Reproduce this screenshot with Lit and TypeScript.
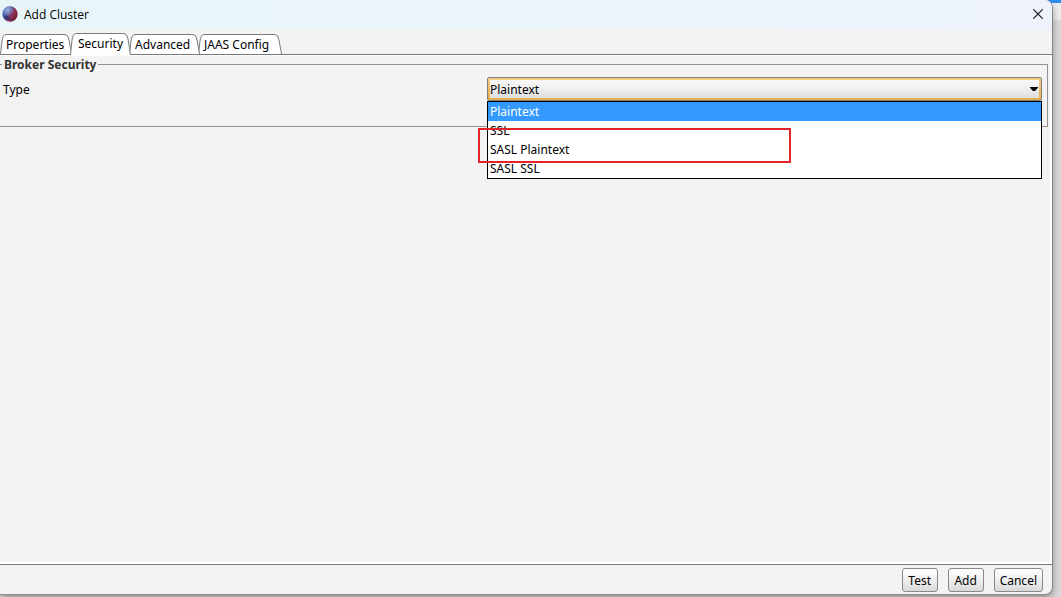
import { LitElement, html, css } from "lit";
import { customElement, state } from "lit/decorators.js";
import { classMap } from "lit/directives/class-map.js";

const TABS = ["Properties", "Security", "Advanced", "JAAS Config"];
const TYPES = ["Plaintext", "SSL", "SASL Plaintext", "SASL SSL"];

@customElement("app-root")
export class AppRoot extends LitElement {
  @state() private tab = "Security";
  @state() private type = "Plaintext";

  static styles = css`
    :host {
      display: block;
      box-sizing: border-box;
      height: 100vh;
      padding: 0 8px 2px 0;
      overflow: hidden;
      background: linear-gradient(#2f8ff0 0 3px, #eeeeee 3px 20px, #dcdcdc 20px);
      font: 12px/19px "Noto Sans", "Open Sans", sans-serif;
      color: #000;
    }
    * { box-sizing: border-box; }
    button, select { font: inherit; color: inherit; }
    .window {
      display: flex;
      flex-direction: column;
      height: 100%;
      background: #f3f3f3;
      border-right: 1px solid #858585;
      border-bottom: 1px solid #8c8c8c;
      border-radius: 0 8px 8px 0;
      box-shadow: 0 4px 8px rgba(0, 0, 0, 0.35);
      overflow: hidden;
    }
    .titlebar {
      display: flex;
      flex: none;
      align-items: center;
      gap: 6px;
      height: 30px;
      padding: 0 9px 2px 2px;
      background: linear-gradient(90deg, #e8f5f8, #eef3fb);
    }
    .logo { display: block; width: 16px; height: 16px; }
    .title {
      flex: 1;
      margin: 0;
      font: 400 12px/19px "Open Sans", "Noto Sans", sans-serif;
    }
    .close { display: block; padding: 0; border: 0; background: none; }
    .close svg { display: block; width: 10px; height: 10px; }
    .tabs {
      display: grid;
      grid-template-columns: 70px 59px 69px 82px;
      align-items: end;
      flex: none;
      height: 24px;
    }
    .tab {
      position: relative;
      display: flex;
      height: 20px;
      margin-right: -2px;
      padding: 0;
      border: 0;
      background: none;
      text-align: left;
      line-height: 19px;
    }
    .tab:nth-child(1) { z-index: 3; }
    .tab:nth-child(2) { z-index: 2; }
    .tab:nth-child(3) { z-index: 1; }
    .tab.on { z-index: 4; height: 22px; margin-bottom: -1px; }
    .label {
      flex: 1;
      height: 100%;
      border-top: 1px solid #7a7a7a;
      background: #fff;
      white-space: nowrap;
    }
    .on .label { padding-left: 2px; }
    .cap { display: block; flex: none; height: 100%; fill: #fff; }
    .cap.l { width: 6px; }
    .cap.r { width: 7px; }
    .cap .edge { fill: none; stroke: #7a7a7a; }
    .panel {
      flex: 1;
      padding-right: 4px;
      border-top: 1px solid #7a7a7a;
      border-bottom: 1px solid #7a7a7a;
      box-shadow: inset -2px -2px #fff, inset 0 1px #fcfcfc;
    }
    .group {
      min-width: 0;
      margin: 0;
      padding: 3px 5px 25px 3px;
      border: 1px solid #929292;
      border-left: 0;
    }
    .legend {
      margin-left: -1px;
      padding: 0 2px;
      color: #333;
      font-weight: 700;
    }
    .row {
      display: grid;
      grid-template-columns: 484fr 555fr;
      align-items: center;
    }
    .combo { position: relative; }
    .frame {
      padding: 2px;
      border: 1px solid #808080;
      border-radius: 2px;
      background: linear-gradient(#f8cf88, #e6ac4c);
    }
    .select {
      display: block;
      width: 100%;
      height: 18px;
      padding: 0;
      border: 0;
      border-radius: 0;
      outline: 0;
      appearance: none;
      background: linear-gradient(#f8f8f8, #f0f0f0 45%, #dedede);
    }
    .arrow {
      position: absolute;
      top: 10px;
      right: 4px;
      width: 8px;
      height: 4px;
      pointer-events: none;
    }
    .list {
      position: absolute;
      top: 100%;
      left: 0;
      right: 0;
      margin: 0;
      padding: 0;
      border: 1px solid #000;
      background: #fff;
      list-style: none;
    }
    .option { padding-left: 2px; }
    .option.on { background: #3399ff; color: #fff; }
    .mark {
      position: absolute;
      top: 51px;
      left: -9px;
      width: 313px;
      height: 35px;
      border: 2px solid #e3242b;
      pointer-events: none;
    }
    .footer {
      display: flex;
      flex: none;
      justify-content: flex-end;
      gap: 10px;
      padding: 3px 9px 2px;
    }
    .action {
      min-width: 36px;
      height: 24px;
      padding: 0 5px;
      border: 1px solid #8a8a8a;
      border-radius: 3px;
      background: linear-gradient(#fff, #f1f1f1 45%, #d9d9d9);
    }
  `;

  private renderTab(name: string) {
    const on = this.tab === name;
    const h = on ? 22 : 20;
    return html`<button
      class=${classMap({ tab: true, on })}
      role="tab"
      aria-selected=${on ? "true" : "false"}
      @click=${() => (this.tab = name)}
    >
      <svg class="cap l" viewBox="0 0 6 ${h}" aria-hidden="true">
        <path d="M0 ${h} L2 5 Q3 .5 6 .5 V${h}Z" />
        <path class="edge" d="M.5 ${h} L2 7 Q3 .5 6 .5" />
      </svg>
      <span class="label">${name}</span>
      <svg class="cap r" viewBox="0 0 7 ${h}" aria-hidden="true">
        <path d="M0 .5 Q3 .5 4 5 L7 ${h} H0Z" />
        <path class="edge" d="M0 .5 Q3 .5 4 6 L6.5 ${h}" />
      </svg>
    </button>`;
  }

  render() {
    return html`<main class="window">
      <header class="titlebar">
        <svg class="logo" viewBox="0 0 16 16" aria-hidden="true">
          <defs>
            <linearGradient id="ball" x1="0" y1="0.2" x2="1" y2="0.8">
              <stop offset="0" stop-color="#3f66b4" />
              <stop offset="0.4" stop-color="#4a4a92" />
              <stop offset="0.65" stop-color="#93304f" />
              <stop offset="1" stop-color="#6c1730" />
            </linearGradient>
            <radialGradient id="shine" cx="0.35" cy="0.25" r="0.45">
              <stop offset="0" stop-color="#a9c4ee" stop-opacity="0.8" />
              <stop offset="1" stop-color="#a9c4ee" stop-opacity="0" />
            </radialGradient>
          </defs>
          <circle cx="8" cy="8" r="7.7" fill="url(#ball)" />
          <path d="M2 11 Q6 15.5 12 13.500 Q7 13 5 9Z" fill="#232a6b" opacity="0.7" />
          <path d="M6 7 L11 6 L12 10 L7 11Z" fill="#7a2858" opacity="0.7" />
          <circle cx="8" cy="8" r="7.7" fill="url(#shine)" />
        </svg>
        <h1 class="title">Add Cluster</h1>
        <button class="close" aria-label="Close">
          <svg viewBox="0 0 10 10" aria-hidden="true">
            <path d="M.3 .3 L9.700 9.700 M9.700 .3 L.3 9.700" stroke="#111" stroke-width="1.1" />
          </svg>
        </button>
      </header>
      <nav class="tabs" role="tablist">${TABS.map((t) => this.renderTab(t))}</nav>
      <section class="panel">
        <fieldset class="group">
          <legend class="legend">Broker Security</legend>
          <div class="row">
            <label for="type">Type</label>
            <div class="combo">
              <div class="frame">
                <select
                  id="type"
                  class="select"
                  .value=${this.type}
                  @change=${(e: Event) => (this.type = (e.target as HTMLSelectElement).value)}
                >
                  ${TYPES.map((t) => html`<option ?selected=${t === this.type}>${t}</option>`)}
                </select>
              </div>
              <svg class="arrow" viewBox="0 0 8 4" aria-hidden="true">
                <path d="M0 0 H8 V.8 L5 4 H3 L0 .8Z" />
              </svg>
              <ul class="list" role="listbox" aria-label="Type">
                ${TYPES.map(
                  (t) => html`<li
                    class=${classMap({ option: true, on: t === this.type })}
                    role="option"
                    aria-selected=${t === this.type ? "true" : "false"}
                    @click=${() => (this.type = t)}
                  >${t}</li>`
                )}
              </ul>
              <div class="mark"></div>
            </div>
          </div>
        </fieldset>
      </section>
      <footer class="footer">
        <button class="action">Test</button>
        <button class="action">Add</button>
        <button class="action">Cancel</button>
      </footer>
    </main>`;
  }
}
